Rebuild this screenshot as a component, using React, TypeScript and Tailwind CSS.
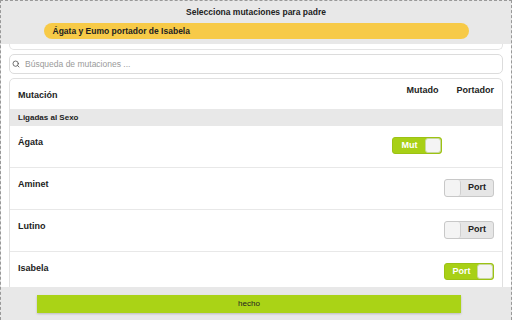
import { Search } from "lucide-react";

type Row = { name: string; mut?: boolean; port?: boolean; mutOn?: boolean; portOn?: boolean };

const rows: Row[] = [
  { name: "Ágata", mut: true, mutOn: true },
  { name: "Aminet", port: true, portOn: false },
  { name: "Lutino", port: true, portOn: false },
  { name: "Isabela", port: true, portOn: true },
];

function Toggle({ label, on }: { label: string; on: boolean }) {
  if (on) {
    return (
      <div className="flex h-[17px] w-[50px] items-center justify-between rounded-[3px] border border-[#9cc214] bg-[#a8d016] pl-[1px]">
        <span className="flex-1 text-center text-[9px] font-bold text-white">{label}</span>
        <span className="h-[15px] w-[16px] rounded-[3px] border border-[#c9d8a0] bg-[#f4f4f4]" />
      </div>
    );
  }
  return (
    <div className="flex h-[18px] w-[50px] items-center justify-between rounded-[3px] border border-[#c8c8c8] bg-[#e6e6e6]">
      <span className="h-[16px] w-[16px] rounded-[3px] border-r border-[#cfcfcf] bg-[#f4f4f4]" />
      <span className="flex-1 text-center text-[9px] font-bold text-[#222]">{label}</span>
    </div>
  );
}

export default function App() {
  return (
    <div className="flex h-[320px] w-[512px] flex-col overflow-hidden border-l border-r border-t border-dashed border-[#999] bg-[#e8e8e8] font-['Liberation_Sans',Arial,sans-serif] text-[#222]">
      {/* Header */}
      <header className="flex h-[43px] shrink-0 flex-col items-center">
        <div className="mt-[5px] text-[8.5px] font-bold leading-[12px]">Selecciona mutaciones para padre</div>
        <div className="mt-[5px] flex h-[16px] w-[425px] items-center rounded-full bg-[#f7ca47] px-[9px] text-[8.5px] font-bold">
          Ágata y Eumo portador de Isabela
        </div>
      </header>

      {/* Content */}
      <main className="flex-1 overflow-hidden bg-white px-[8px]">
        <div className="h-[6px] rounded-b-[5px] border-b border-l border-r border-[#e4e4e4]" />
        <div className="mt-[4px] flex h-[20px] items-center gap-[5px] rounded-[5px] border border-[#dcdcdc] px-[2px]">
          <Search className="h-[8px] w-[8px] text-[#555]" strokeWidth={2.5} />
          <span className="text-[8.5px] text-[#9a9a9a]">Búsqueda de mutaciones ...</span>
        </div>

        <div className="mt-[4px] rounded-t-[5px] border border-[#e0e0e0]">
          <div className="flex h-[30px] items-start pr-[8px] pl-[8px]">
            <div className="mt-[10px] flex-1 text-[9px] font-bold">Mutación</div>
            <div className="mt-[5px] w-[50px] text-[9px] font-bold">Mutado</div>
            <div className="mt-[5px] text-[9px] font-bold">Portador</div>
          </div>
          <div className="flex h-[17px] items-center bg-[#e8e8e8] px-[8px] text-[8px] font-bold">Ligadas al Sexo</div>
          {rows.map((r) => (
            <div key={r.name} className="flex h-[42px] items-start border-b border-[#e8e8e8] pr-[8px] pl-[8px]">
              <div className="mt-[10px] flex-1 text-[9px] font-bold">{r.name}</div>
              <div className="mt-[11px] w-[52px]">{r.mut && <Toggle label="Mut" on={!!r.mutOn} />}</div>
              <div className="mt-[11px] w-[50px]">{r.port && <Toggle label="Port" on={!!r.portOn} />}</div>
            </div>
          ))}
        </div>
      </main>

      {/* Footer */}
      <footer className="flex h-[33px] shrink-0 items-center pl-[36px]">
        <button className="h-[18px] w-[424px] bg-[#aad316] text-[8px] text-[#222] shadow-[0_1px_2px_rgba(0,0,0,0.2)]">
          hecho
        </button>
      </footer>
    </div>
  );
}
